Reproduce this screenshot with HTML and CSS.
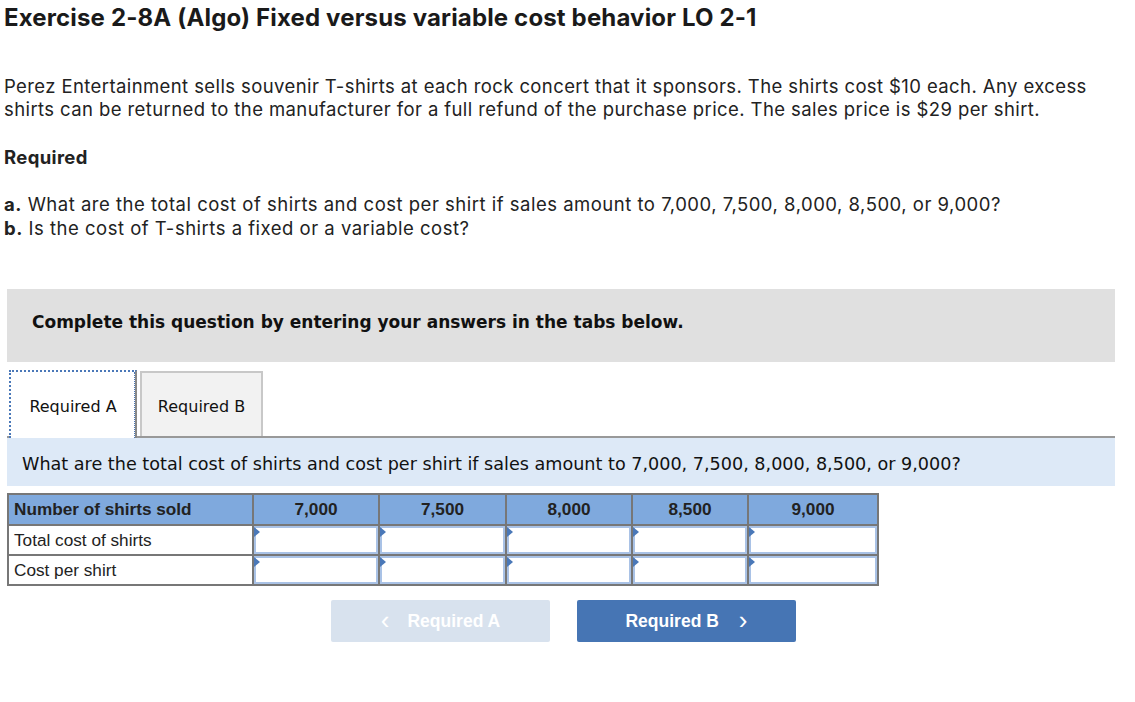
FILE: index.html
```html
<!DOCTYPE html>
<html>
<head>
<meta charset="utf-8">
<link rel="stylesheet" href="styles.css">
</head>
<body>
<h1 class="title">Exercise 2-8A (Algo) Fixed versus variable cost behavior LO 2-1</h1>
<p class="intro">Perez Entertainment sells souvenir T-shirts at each rock concert that it sponsors. The shirts cost $10 each. Any excess shirts can be returned to the manufacturer for a full refund of the purchase price. The sales price is $29 per shirt.</p>
<h2 class="req">Required</h2>
<div class="reqlist">
  <div><b>a.</b> What are the total cost of shirts and cost per shirt if sales amount to 7,000, 7,500, 8,000, 8,500, or 9,000?</div>
  <div><b>b.</b> Is the cost of T-shirts a fixed or a variable cost?</div>
</div>
<div class="banner">Complete this question by entering your answers in the tabs below.</div>
<div class="tabs">
  <div class="tab active">Required A</div>
  <div class="tab">Required B</div>
</div>
<div class="question">What are the total cost of shirts and cost per shirt if sales amount to 7,000, 7,500, 8,000, 8,500, or 9,000?</div>
<table class="grid">
  <colgroup>
    <col class="c0"><col class="c1"><col class="c2"><col class="c3"><col class="c4"><col class="c5">
  </colgroup>
  <tr class="head">
    <th class="label">Number of shirts sold</th><th>7,000</th><th>7,500</th><th>8,000</th><th>8,500</th><th>9,000</th>
  </tr>
  <tr>
    <td class="label">Total cost of shirts</td>
    <td class="in"><div class="box"></div></td><td class="in"><div class="box"></div></td><td class="in"><div class="box"></div></td><td class="in"><div class="box"></div></td><td class="in"><div class="box"></div></td>
  </tr>
  <tr>
    <td class="label">Cost per shirt</td>
    <td class="in"><div class="box"></div></td><td class="in"><div class="box"></div></td><td class="in"><div class="box"></div></td><td class="in"><div class="box"></div></td><td class="in"><div class="box"></div></td>
  </tr>
</table>
<div class="nav">
  <div class="btn prev"><span class="chev">&lsaquo;</span>Required A</div>
  <div class="btn next">Required B<span class="chev">&rsaquo;</span></div>
</div>
</body>
</html>
```
FILE: styles.css
```css
html, body { margin: 0; padding: 0; background: #fff; }
body { font-family: Inter, "Open Sans", sans-serif; color: #222; }
.title { font-size: 24px; letter-spacing: 0.15px; font-weight: 700; margin: 0; padding: 3px 0 0 4px; line-height: 30px; color: #1a1a1a; }
.intro { font-size: 18.5px; letter-spacing: 0.4px; line-height: 23px; margin: 0; padding: 42px 20px 0 4px; color: #222; }
.req { font-size: 18.5px; letter-spacing: 0.35px; font-weight: 700; margin: 0; padding: 25px 0 0 4px; line-height: 23px; }
.reqlist { font-size: 18.5px; letter-spacing: 0.5px; line-height: 24px; padding: 23px 0 0 4px; }
.reqlist b { font-weight: 700; }
.banner { margin: 49px 20px 0 7px; height: 73px; background: #e0e0e0; box-sizing: border-box; padding: 0 0 8px 25px; display: flex; align-items: center; font-family: "DejaVu Sans", Verdana, sans-serif; font-weight: 700; font-size: 17px; color: #111; }
.tabs { margin: 8px 20px 0 7px; display: flex; border-bottom: 2px solid #999; height: 66px; align-items: flex-end; }
.tab { height: 65px; box-sizing: border-box; display: flex; align-items: center; justify-content: center; padding-top: 3px; font-family: "DejaVu Sans", Verdana, sans-serif; font-size: 16px; color: #111; background: #f2f2f2; border: 2px solid #c8c8c8; border-bottom: none; width: 123px; margin-left: 3px; }
.tab.active { position: relative; background: #fff; border-top: 2px dotted #4a78b8; border-left: 2px dotted #4a78b8; border-right: 2px solid #888; width: 128px; margin-left: 2px; margin-bottom: -2px; height: 68px; padding-bottom: 0; }
.tab.active::after { content: ""; position: absolute; top: 0; right: 0; bottom: 0; border-right: 1px dotted #4a78b8; }
.question { margin: 0 20px 0 7px; height: 48px; box-sizing: border-box; padding-top: 4px; background: #dde9f7; display: flex; align-items: center; padding-left: 15px; font-family: "DejaVu Sans", Verdana, sans-serif; font-size: 17.6px; color: #111; }
.grid { margin: 7px 0 0 7px; border-collapse: collapse; border: 2px solid #777; font-family: "Liberation Sans", Arial, sans-serif; font-size: 17.2px; table-layout: fixed; width: 870px; }
.c0 { width: 245px; } .c1 { width: 126px; } .c2 { width: 127px; } .c3 { width: 126px; } .c4 { width: 116px; } .c5 { width: 130px; }
.grid th, .grid td { border: 2px solid #777; padding: 0; }
.grid tr.head th { background: #7fa9dd; height: 29px; font-weight: 700; color: #222; text-align: center; }
.grid tr.head th.label { text-align: left; padding-left: 5px; }
.grid td { height: 27px; line-height: 27px; padding-top: 1px; }
.grid td.label { padding-left: 5px; color: #222; }
.grid td.in { position: relative; }
.box { position: absolute; inset: 0; border: 2px solid #a9c2e6; background: #fff; }
.box::before { content: ""; position: absolute; left: -2px; top: -1px; border-left: 6px solid #4a78b8; border-top: 5px solid transparent; border-bottom: 5px solid transparent; }
.nav { margin: 14px 0 0 331px; display: flex; gap: 27px; }
.btn { width: 219px; height: 42px; border-radius: 2px; display: flex; align-items: center; justify-content: center; font-family: "Liberation Sans", Arial, sans-serif; font-weight: 700; font-size: 17.5px; color: #fff; }
.btn.prev { background: #d8e2ee; }
.btn.next { background: #4675b4; }
.chev { font-size: 26px; font-weight: 400; line-height: 1; margin-top: -3px; }
.prev .chev { margin-right: 18px; }
.next .chev { margin-left: 20px; }
```
